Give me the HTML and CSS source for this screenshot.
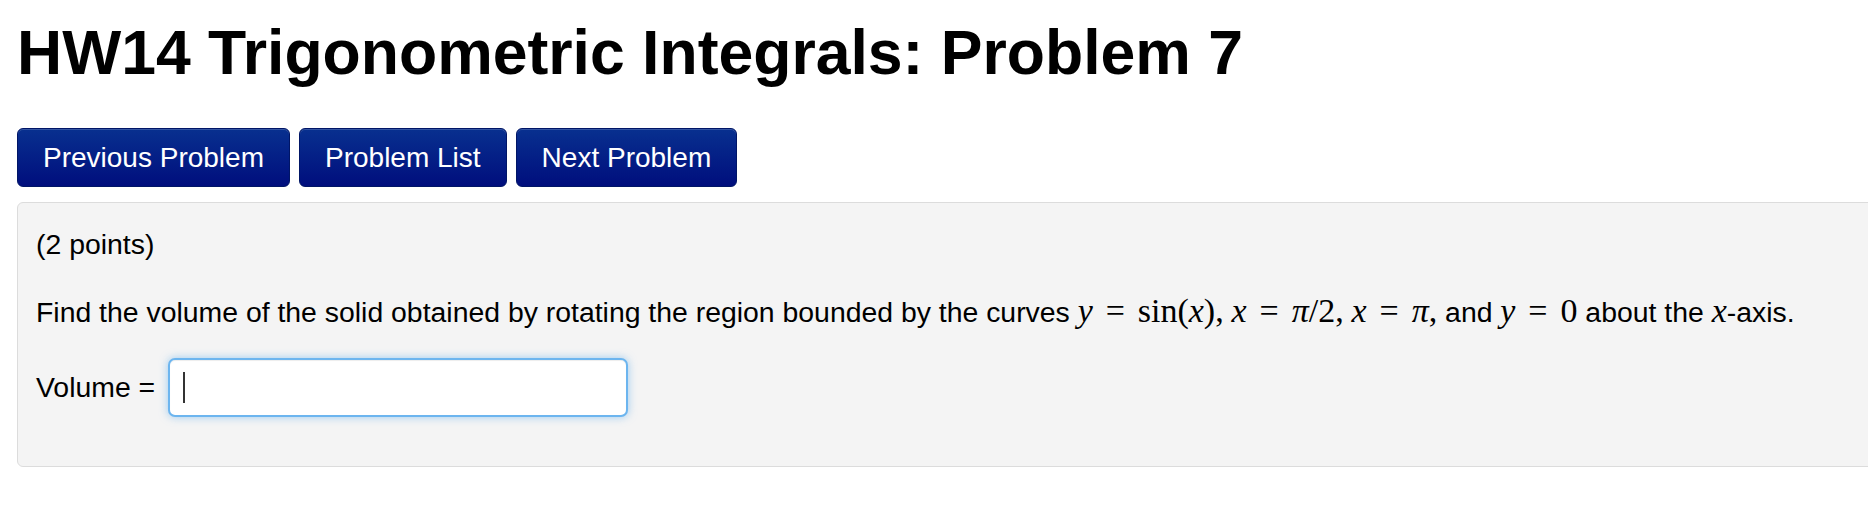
FILE: index.html
```html
<!DOCTYPE html>
<html lang="en">
<head>
    <meta charset="UTF-8">
    <meta name="viewport" content="width=device-width, initial-scale=1.0">
    <title>HW14 Trigonometric Integrals: Problem 7</title>
    <link rel="stylesheet" href="styles.css">
</head>
<body>
    <div class="page">
        <h1>HW14 Trigonometric Integrals: Problem 7</h1>
        <div class="nav">
            <button class="nav-btn">Previous Problem</button>
            <button class="nav-btn">Problem List</button>
            <button class="nav-btn">Next Problem</button>
        </div>
        <div class="problem">
            <p class="points">(2 points)</p>
            <p class="question">Find the volume of the solid obtained by rotating the region bounded by the curves
                <span class="math"><i>y</i><span class="rel">=</span>sin(<i>x</i>),</span>
                <span class="math"><i>x</i><span class="rel">=</span><i>&pi;</i>/2,</span>
                <span class="math"><i>x</i><span class="rel">=</span><i>&pi;</i>,</span> and
                <span class="math"><i>y</i><span class="rel">=</span>0</span> about the <span class="math"><i>x</i></span>-axis.</p>
            <div class="answer">
                <label class="answer-label">Volume =</label>
                <div class="answer-box"><span class="caret"></span></div>
            </div>
        </div>
    </div>
</body>
</html>
```

FILE: styles.css
```css
body {
    margin: 0;
    font-family: "Liberation Sans", Arial, sans-serif;
    color: #000;
    background: #fff;
    overflow: hidden;
}
.page {
    padding-left: 17px;
}
h1 {
    margin: 16px 0 0 0;
    font-size: 62.5px;
    line-height: 72px;
    font-weight: bold;
}
.nav {
    display: flex;
    gap: 9px;
    margin-top: 40px;
}
.nav-btn {
    height: 59px;
    padding: 0 25px;
    font-family: "Liberation Sans", Arial, sans-serif;
    font-size: 28px;
    color: #fff;
    background: linear-gradient(#08308f, #000e7d);
    border: 1px solid #001566;
    border-radius: 6px;
    box-shadow: inset 0 1px 0 rgba(255, 255, 255, 0.18);
}
.problem {
    margin-top: 15px;
    width: 1900px;
    height: 216px;
    padding: 21px 18px 26px 18px;
    background: #f4f4f4;
    border: 1px solid #dcdcdc;
    border-radius: 6px;
}
.problem p {
    margin: 0;
    font-size: 28.4px;
    line-height: 40px;
}
.question {
    margin-top: 27px !important;
}
.math {
    font-family: "Liberation Serif", "Times New Roman", serif;
    font-size: 34px;
}
.rel {
    margin: 0 0.38em;
}
.answer {
    display: flex;
    align-items: center;
    margin-top: 26px;
    font-size: 28.4px;
}
.answer-label {
    margin-right: 13px;
}
.answer-box {
    display: flex;
    align-items: center;
    width: 443px;
    height: 55px;
    padding-left: 13px;
    background: #fff;
    border: 2px solid rgba(82, 168, 236, 0.85);
    border-radius: 7px;
    box-shadow: inset 0 1px 1px rgba(0, 0, 0, 0.075), 0 0 9px rgba(82, 168, 236, 0.55);
}
.caret {
    width: 2px;
    height: 31px;
    background: #333;
}
```
